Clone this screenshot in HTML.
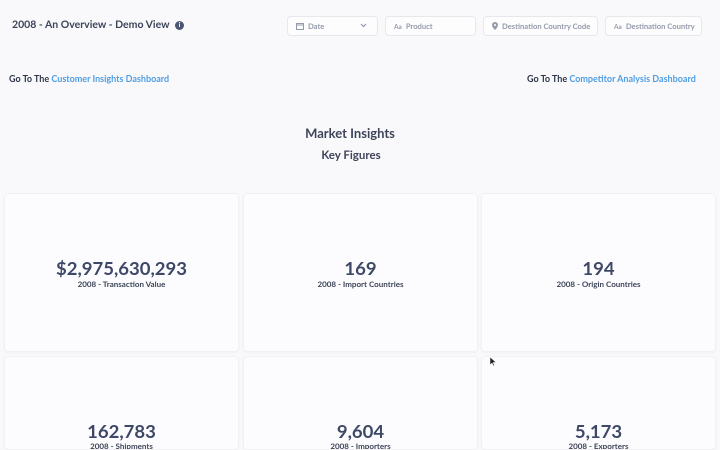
<!DOCTYPE html>
<html style="width:720px;height:450px;overflow:hidden"><head><meta charset="utf-8"><style>
*{box-sizing:border-box;margin:0;padding:0}
body{width:720px;height:450px;overflow:hidden;background:#f9f9fb;font-family:"Lato","Liberation Sans",sans-serif;color:#4c5773;position:relative}
.title{position:absolute;left:12px;top:19px;font-size:10.5px;font-weight:bold;color:#3d4459;white-space:nowrap}
.info{position:absolute;left:175px;top:21px;width:9px;height:9px;border-radius:50%;background:#4c5773;color:#fff;font-size:7px;font-weight:bold;text-align:center;line-height:9px}
.f{position:absolute;top:16px;height:20px;border:1px solid #e6e8ee;border-radius:4px;background:#fdfdfe;font-size:7.6px;font-weight:bold;color:#949aab;line-height:18px;padding-left:8px;white-space:nowrap}
.f svg{vertical-align:-1px;margin-right:4px}
.aa{font-size:6.5px;font-weight:bold;margin-right:4px}
.lnk{position:absolute;top:73px;font-size:9px;font-weight:bold;color:#2e3548;white-space:nowrap}
.lnk span{color:#509ee3}
.h1{position:absolute;left:0;width:700px;text-align:center;top:125px;font-size:13px;font-weight:bold;color:#3d4459}
.h2{position:absolute;left:0;width:702px;text-align:center;top:149px;font-size:11.5px;font-weight:bold;color:#3d4459}
.c{position:absolute;background:#fcfcfe;border:1px solid #f1f1f4;border-radius:4px;box-shadow:0 1px 2px rgba(0,0,0,.03);overflow:hidden}
.c .n{position:absolute;left:0;right:0;text-align:center;font-size:18.5px;font-weight:bold;color:#3d4766}
.c .l{position:absolute;left:0;right:0;text-align:center;font-size:8px;font-weight:bold;color:#3d4459}
</style></head><body>
<div class="title">2008 - An Overview - Demo View</div>
<div class="info">i</div>
<div class="f" style="left:287px;width:91px"><svg width="8" height="8" viewBox="0 0 8 8"><rect x=".5" y="1.5" width="7" height="6" fill="none" stroke="#949aab"/><line x1="0" y1="3" x2="8" y2="3" stroke="#949aab"/></svg>Date<svg style="position:absolute;right:6px;top:6px" width="7" height="5" viewBox="0 0 7 5"><path d="M1 1l2.5 2.5L6 1" fill="none" stroke="#949aab" stroke-width="1.2"/></svg></div>
<div class="f" style="left:385px;width:91px"><span class="aa">Aa</span>Product</div>
<div class="f" style="left:483px;width:115px"><svg width="6" height="8" viewBox="0 0 6 8"><path d="M3 0a3 3 0 0 1 3 3c0 2-3 5-3 5S0 5 0 3a3 3 0 0 1 3-3z" fill="#949aab"/><circle cx="3" cy="3" r="1" fill="#fff"/></svg>Destination Country Code</div>
<div class="f" style="left:605px;width:97px"><span class="aa">Aa</span>Destination Country</div>
<div class="lnk" style="left:9px">Go To The <span>Customer Insights Dashboard</span></div>
<div class="lnk" style="left:527px">Go To The <span>Competitor Analysis Dashboard</span></div>
<div class="h1">Market Insights</div>
<div class="h2">Key Figures</div>
<div class="c" style="left:4px;top:193px;width:235px;height:159px"><div class="n" style="top:63px">$2,975,630,293</div><div class="l" style="top:85px">2008 - Transaction Value</div></div>
<div class="c" style="left:243px;top:193px;width:235px;height:159px"><div class="n" style="top:63px">169</div><div class="l" style="top:85px">2008 - Import Countries</div></div>
<div class="c" style="left:481px;top:193px;width:235px;height:159px"><div class="n" style="top:63px">194</div><div class="l" style="top:85px">2008 - Origin Countries</div></div>
<div class="c" style="left:4px;top:356px;width:235px;height:94px"><div class="n" style="top:63px">162,783</div><div class="l" style="top:84px">2008 - Shipments</div></div>
<div class="c" style="left:243px;top:356px;width:235px;height:94px"><div class="n" style="top:63px">9,604</div><div class="l" style="top:84px">2008 - Importers</div></div>
<div class="c" style="left:481px;top:356px;width:235px;height:94px"><div class="n" style="top:63px">5,173</div><div class="l" style="top:84px">2008 - Exporters</div></div>
<svg style="position:absolute;left:490px;top:357px" width="7" height="10" viewBox="0 0 7 10"><path d="M0 0v8l2-2 1.5 3 1-.5L3 5.5h3z" fill="#222" stroke="#fff" stroke-width=".5"/></svg>
</body></html>
